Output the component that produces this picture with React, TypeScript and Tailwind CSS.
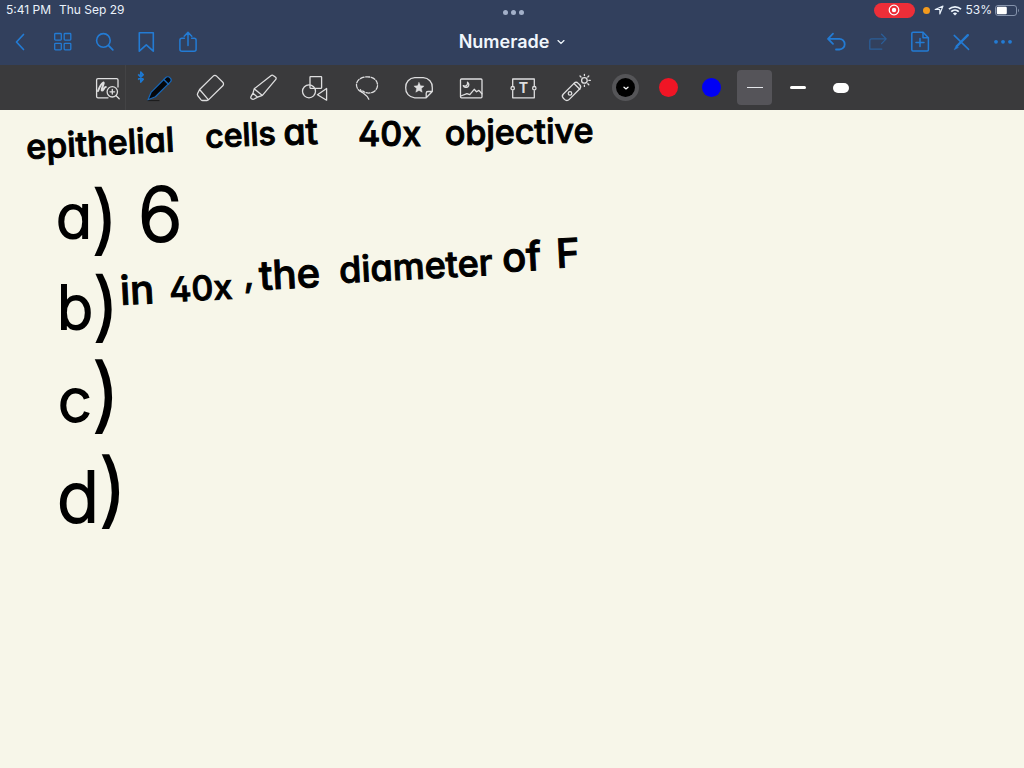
import { useState, type ReactNode } from "react";

interface Word {
  text: string;
  className: string;
}

interface Tool {
  id: string;
  label: string;
  icon: ReactNode;
}

const SMALL = "font-medium [-webkit-text-stroke:1px_black]";
const LARGE = "font-light [-webkit-text-stroke:2px_black]";

const NOTES: Word[][] = [
  [
    { text: "epithelial", className: `left-[27px] top-[20px] text-[34px] -rotate-3 ${SMALL}` },
    { text: "cells", className: `left-[206px] top-[11px] text-[32px] -rotate-3 ${SMALL}` },
    { text: "at", className: `left-[284px] top-[4px] text-[36px] -rotate-2 ${SMALL}` },
    { text: "40x", className: `left-[358px] top-[7px] text-[34px] ${SMALL}` },
    { text: "objective", className: `left-[445px] top-[6px] text-[34px] -rotate-1 ${SMALL}` },
  ],
  [
    { text: "a", className: `left-[56px] top-[76px] text-[60px] ${LARGE}` },
    { text: ")", className: `left-[92px] top-[71px] text-[74px] ${LARGE}` },
    { text: "6", className: `left-[138px] top-[67px] text-[74px] ${LARGE}` },
  ],
  [
    { text: "b", className: `left-[57px] top-[167px] text-[60px] ${LARGE}` },
    { text: ")", className: `left-[93px] top-[158px] text-[74px] ${LARGE}` },
    { text: "in", className: `left-[121px] top-[161px] text-[40px] -rotate-3 ${SMALL}` },
    { text: "40x", className: `left-[170px] top-[163px] text-[34px] -rotate-3 ${SMALL}` },
    { text: ",", className: `left-[244px] top-[148px] text-[34px] ${SMALL}` },
    { text: "the", className: `left-[260px] top-[146px] text-[40px] -rotate-3 ${SMALL}` },
    { text: "diameter", className: `left-[340px] top-[142px] text-[36px] -rotate-3 ${SMALL}` },
    { text: "of", className: `left-[503px] top-[128px] text-[40px] -rotate-3 ${SMALL}` },
    { text: "F", className: `left-[557px] top-[124px] text-[40px] -rotate-3 ${SMALL}` },
  ],
  [
    { text: "c", className: `left-[58px] top-[260px] text-[60px] ${LARGE}` },
    { text: ")", className: `left-[92px] top-[243px] text-[80px] ${LARGE}` },
  ],
  [
    { text: "d", className: `left-[57px] top-[352px] text-[70px] ${LARGE}` },
    { text: ")", className: `left-[99px] top-[338px] text-[80px] ${LARGE}` },
  ],
];

function Icon({ children }: { children: ReactNode }) {
  return (
    <svg
      className="w-8 h-8 flex-shrink-0"
      viewBox="0 0 32 32"
      fill="none"
      stroke="currentColor"
      strokeWidth="1.3"
      strokeLinecap="round"
      strokeLinejoin="round"
      aria-hidden="true"
    >
      {children}
    </svg>
  );
}

const NAV_LEFT: Tool[] = [
  { id: "back", label: "Back", icon: <path d="M18.5 8.5 11.5 16l7 7.5" strokeWidth="1.7" /> },
  {
    id: "pages",
    label: "Pages",
    icon: (
      <>
        <rect x="7.7" y="7.5" width="6.6" height="6.6" rx="0.8" />
        <rect x="17.2" y="7.5" width="6.6" height="6.6" rx="0.8" />
        <rect x="7.7" y="17.3" width="6.6" height="6.6" rx="0.8" />
        <rect x="17.2" y="17.3" width="6.6" height="6.6" rx="0.8" />
      </>
    ),
  },
  {
    id: "search",
    label: "Search",
    icon: (
      <>
        <circle cx="14.4" cy="14.4" r="6.8" strokeWidth="1.6" />
        <path d="m19.4 19.4 4.4 4.4" strokeWidth="1.8" />
      </>
    ),
  },
  {
    id: "bookmark",
    label: "Bookmark",
    icon: <path d="M8.3 6.8h14v18.4l-7-6.4-7 6.4z" strokeWidth="1.6" />,
  },
  {
    id: "share",
    label: "Share",
    icon: (
      <path
        d="M11.4 12.3H8.9a2 2 0 0 0-2 2v8.9a2 2 0 0 0 2 2h12.2a2 2 0 0 0 2-2v-8.9a2 2 0 0 0-2-2h-2.5M15 19.5V6.6M11.2 10.2 15 6.4l3.8 3.8"
        strokeWidth="1.5"
      />
    ),
  },
];

const NAV_RIGHT: Tool[] = [
  {
    id: "undo",
    label: "Undo",
    icon: <path d="M14 7.7 9 12.9l5 5M9.2 12.9h11.2a5.3 5.3 0 0 1 0 10.6H17" strokeWidth="1.8" />,
  },
  {
    id: "redo",
    label: "Redo",
    icon: (
      <path d="m20.6 8.2 4.6 4.7-4.6 4.7M25 12.9H10.6a1.8 1.8 0 0 0-1.8 1.8v8.4h12" opacity="0.5" />
    ),
  },
  {
    id: "add",
    label: "Add page",
    icon: (
      <>
        <path
          d="M10 6.3h10l5.4 5.5v12a1.2 1.2 0 0 1-1.2 1.2H10a1.2 1.2 0 0 1-1.2-1.2V7.5A1.2 1.2 0 0 1 10 6.3z"
          strokeWidth="1.5"
        />
        <path d="M20 6.5v5.2h5.2M17 12.6v8M13 16.6h8" strokeWidth="1.5" />
      </>
    ),
  },
  {
    id: "readonly",
    label: "Read-only mode",
    icon: (
      <>
        <path d="m9.2 9.4 14.4 14" strokeWidth="1.5" />
        <path d="M22.8 9.2 12 20" strokeWidth="2.4" />
        <path d="m11.2 19.6-2 4.2 4-2.2z" fill="currentColor" strokeWidth="0.5" />
      </>
    ),
  },
  {
    id: "more",
    label: "More",
    icon: (
      <g fill="currentColor" stroke="none">
        <circle cx="9" cy="15.8" r="1.9" />
        <circle cx="16" cy="15.8" r="1.9" />
        <circle cx="23" cy="15.8" r="1.9" />
      </g>
    ),
  },
];

const TOOLS: Tool[] = [
  {
    id: "zoom",
    label: "Zoom window",
    icon: (
      <>
        <path d="M27 15V8a1.4 1.4 0 0 0-1.4-1.4H7A1.4 1.4 0 0 0 5.6 8v16.4A1.4 1.4 0 0 0 7 25.8h10" />
        <path
          d="M7 19c1.4-3.6 3.4-7.8 5.2-8.4 2-.4-2.8 7.6-1.2 8 1.4.2 2.2-3.6 3.8-3.6"
          strokeWidth="2"
        />
        <circle cx="21.3" cy="19.8" r="5.2" />
        <path d="m25.2 23.8 3 3M19 19.8h4.6M21.3 17.5v4.6" />
      </>
    ),
  },
  {
    id: "pen",
    label: "Pen",
    icon: (
      <>
        <path d="M5 28.6h11" stroke="#111" strokeWidth="0.8" />
        <path
          d="m8 20.4 14.8-14.9c1.1-1.1 3-1 4.3.3 1.3 1.3 1.4 3 .3 4.1L12.4 24.8 5 27.8z"
          fill="#05070b"
          stroke="#1767b8"
          strokeWidth="1.2"
        />
        <path d="m20.7 7.5 4.8 4.7" stroke="#1767b8" strokeWidth="1.5" />
      </>
    ),
  },
  {
    id: "eraser",
    label: "Eraser",
    icon: (
      <path d="M18.2 4.1a2.4 2.4 0 0 1 3.4 0l6.2 6.2a2.4 2.4 0 0 1 0 3.4L13.4 27.9a2 2 0 0 1-1.4.6H7.6a2 2 0 0 1-1.5-.7l-3.2-4a2.2 2.2 0 0 1-.3-2.3l2-4zM4.6 17.5l8.9 10.3" />
    ),
  },
  {
    id: "highlighter",
    label: "Highlighter",
    icon: (
      <path d="M24.2 3.6a1.4 1.4 0 0 1 2-.2l2.4 1.9a1.4 1.4 0 0 1 .2 2L15.4 23.4l-8.2-6.6zM7.2 16.8 6 21.2l4.6 4 4.8-1.8M6 21.2l-1.9 3.2c-.5.8-.4 1.7.4 2.3.8.6 1.9.8 2.7.3l3.4-1.8" />
    ),
  },
  {
    id: "shapes",
    label: "Shapes",
    icon: (
      <>
        <rect x="11" y="4.7" width="11.6" height="11.6" rx="0.5" />
        <circle cx="10" cy="19.3" r="6.5" />
        <path d="m18.5 22.7 9.1-6.2v11.7z" />
      </>
    ),
  },
  {
    id: "lasso",
    label: "Lasso",
    icon: (
      <>
        <path
          d="M10.5 20C3.9 16.8 4.2 9.8 9 6.8c4.8-3 12-2.7 15.5 1.2 3.7 4.2 2.3 10.6-3.7 12.6-2.9.9-6.6.6-9-1.6"
          strokeDasharray="4 1.6"
        />
        <path d="M9.4 17.6c.2 3.6 6.4 4.2 8.4 9.6" />
      </>
    ),
  },
  {
    id: "elements",
    label: "Elements",
    icon: (
      <>
        <path d="M23.2 25.8H11.7a9.5 9.5 0 0 1-9-10.1 9.5 9.5 0 0 1 9-10.1h8.6a9.5 9.5 0 0 1 9 10.1v3.8zM23.2 25.8v-4.5a1.8 1.8 0 0 1 1.8-1.8h4.3" />
        <path
          d="m16 10.4 1.5 3.3 3.6.4-2.7 2.5.8 3.6-3.2-1.8-3.2 1.8.8-3.6-2.7-2.5 3.6-.4z"
          fill="currentColor"
          strokeWidth="0.4"
        />
      </>
    ),
  },
  {
    id: "image",
    label: "Image",
    icon: (
      <>
        <rect x="5.5" y="7" width="21.5" height="18.8" rx="1" />
        <path d="M12.5 10.2c1.8 1 1.7 3.5.2 4.7-1.5 1-3.8.6-4.4-1.2 2.8 1.1 4.8-.7 4.2-3.5zM5.8 24l6.1-2.4 2.9 1 4.4-5.3 2.3 2.5 2.4-1.4 3 3.3" />
      </>
    ),
  },
  {
    id: "text",
    label: "Text",
    icon: (
      <>
        <path d="M5.7 13.7V7h21.6v6.7M5.7 18.7v7.1h21.6v-7.1" />
        <circle cx="5.7" cy="16.2" r="1.7" />
        <circle cx="27.3" cy="16.2" r="1.7" />
        <text
          x="16.5"
          y="21.2"
          textAnchor="middle"
          fill="currentColor"
          stroke="none"
          className="font-['Inter',sans-serif] text-[14px] font-bold"
        >
          T
        </text>
      </>
    ),
  },
  {
    id: "laser",
    label: "Laser pointer",
    icon: (
      <>
        <rect x="2" y="15.5" width="21" height="8" rx="3" transform="rotate(-45 12.5 19.5)" />
        <circle cx="11" cy="21.4" r="1.8" />
        <path d="m15 11.5 5.8 5.8" />
        <circle cx="25.4" cy="8.4" r="2.8" />
        <path d="M25.4 3.6V2.4M25.4 14.4v-1.2M29.9 8.4h1.4M28.8 5l1-1M22 5l-1-1M28.8 11.8l1 1" />
      </>
    ),
  },
];

const COLORS = [
  { name: "Black", className: "bg-black" },
  { name: "Red", className: "bg-[#f01525]" },
  { name: "Blue", className: "bg-[#0000f5]" },
];

const WIDTHS = [
  { name: "Thin", className: "w-4 h-px bg-gray-200" },
  { name: "Medium", className: "w-4 h-[3px] rounded-full bg-white" },
  { name: "Thick", className: "w-4 h-[10px] rounded-full bg-white" },
];

function NavButton({ item }: { item: Tool }) {
  return (
    <button aria-label={item.label} className="w-[42px] h-full flex items-center justify-center">
      <Icon>{item.icon}</Icon>
    </button>
  );
}

function StatusBar() {
  return (
    <div className="grid grid-cols-[1fr_auto_1fr] items-center h-5 pl-1.5 pr-1 text-[12px] leading-4 text-[#eaf2fb]">
      <div className="flex gap-2">
        <span>5:41 PM</span>
        <span>Thu Sep 29</span>
      </div>
      <div className="flex gap-[3px] pt-1">
        <span className="w-[5px] h-[5px] rounded-full bg-[#a3b0c9]" />
        <span className="w-[5px] h-[5px] rounded-full bg-[#a3b0c9]" />
        <span className="w-[5px] h-[5px] rounded-full bg-[#a3b0c9]" />
      </div>
      <div className="flex items-center justify-end">
        <span className="w-[41px] h-[15px] mr-2 rounded-full bg-[#ed2e38] flex items-center justify-center">
          <svg className="w-3 h-3" viewBox="0 0 12 12" fill="none" aria-hidden="true">
            <circle cx="6" cy="6" r="4.8" stroke="white" strokeWidth="1.2" />
            <circle cx="6" cy="6" r="2.2" fill="white" />
          </svg>
        </span>
        <span className="w-[7px] h-[7px] mr-1 rounded-full bg-[#f39a1d]" />
        <svg className="w-[10px] h-[10px] mr-1" viewBox="0 0 10 10" fill="none" aria-hidden="true">
          <path d="M9 1 5.8 9V4.5H1.2z" stroke="currentColor" strokeWidth="1.1" strokeLinejoin="round" />
        </svg>
        <svg className="w-[14px] h-[11px] mr-1" viewBox="0 0 14 11" fill="none" aria-hidden="true">
          <path
            d="M1 4.2a8.7 8.7 0 0 1 12 0M3.2 6.6a5.5 5.5 0 0 1 7.6 0"
            stroke="currentColor"
            strokeWidth="1.8"
          />
          <path d="M7 10.6 4.9 8.5a3 3 0 0 1 4.2 0z" fill="currentColor" />
        </svg>
        <span className="mr-[3px]">53%</span>
        <svg className="w-[25px] h-[11px]" viewBox="0 0 25 11" fill="none" aria-hidden="true">
          <rect x="0.5" y="0.5" width="21" height="10" rx="2.5" stroke="#8593ac" />
          <rect x="1.8" y="1.8" width="10" height="7.4" rx="1.2" fill="white" />
          <path d="M23 3.8c1.2.4 1.2 3 0 3.4z" fill="#8593ac" />
        </svg>
      </div>
    </div>
  );
}

export default function App() {
  const [activeColor, setActiveColor] = useState("Black");
  const [activeWidth, setActiveWidth] = useState("Thin");

  return (
    <div className="min-h-screen flex flex-col bg-[#f7f6e9] font-['Inter',sans-serif]">
      <header className="bg-[#32405d] pb-px">
        <StatusBar />
        <nav className="grid grid-cols-[1fr_auto_1fr] items-center h-11 text-[#237bd4]">
          <div className="flex h-full">
            {NAV_LEFT.map((item) => (
              <NavButton key={item.id} item={item} />
            ))}
          </div>
          <button className="flex items-center gap-2 text-[#f0f6fc]">
            <span className="text-[18px] leading-6 font-semibold">Numerade</span>
            <svg className="w-2 h-2" viewBox="0 0 8 8" fill="none" aria-hidden="true">
              <path d="m1 2.6 3 2.8 3-2.8" stroke="currentColor" strokeWidth="1.3" strokeLinecap="round" />
            </svg>
          </button>
          <div className="flex h-full justify-end">
            {NAV_RIGHT.map((item) => (
              <NavButton key={item.id} item={item} />
            ))}
          </div>
        </nav>
      </header>

      <div className="flex items-center h-[45px] pl-[81px] bg-[#3a3a3c] text-[#dededf]">
        {TOOLS.map((tool) => (
          <button
            key={tool.id}
            aria-label={tool.label}
            className="relative w-[52px] h-full flex items-center justify-center"
          >
            <Icon>{tool.icon}</Icon>
            {tool.id === "pen" && (
              <>
                <span className="absolute -left-2 top-0 h-full w-px bg-[#434345]" />
                <svg
                  className="absolute left-1 top-1.5 w-2 h-3"
                  viewBox="0 0 8 12"
                  fill="none"
                  aria-hidden="true"
                >
                  <path
                    d="m1.2 3.3 5 5L3.8 11V1l2.4 2.7-5 5"
                    stroke="#1c78d2"
                    strokeWidth="1.7"
                    strokeLinejoin="round"
                  />
                </svg>
              </>
            )}
          </button>
        ))}
        <div className="flex items-center h-full ml-[3px]">
          {COLORS.map((color) => (
            <button
              key={color.name}
              aria-label={color.name}
              onClick={() => setActiveColor(color.name)}
              className="w-[43px] h-full flex items-center justify-center"
            >
              <span
                className={`w-[19px] h-[19px] rounded-full flex items-center justify-center ${color.className} ${
                  color.name === activeColor ? "ring-4 ring-[#555558]" : ""
                }`}
              >
                {color.name === activeColor && (
                  <svg className="w-2 h-2" viewBox="0 0 8 8" fill="none" aria-hidden="true">
                    <path d="m2 3.2 2 1.8 2-1.8" stroke="white" strokeWidth="1.3" strokeLinecap="round" />
                  </svg>
                )}
              </span>
            </button>
          ))}
          {WIDTHS.map((width) => (
            <button
              key={width.name}
              aria-label={width.name}
              onClick={() => setActiveWidth(width.name)}
              className="w-[43px] h-full flex items-center justify-center"
            >
              <span
                className={`w-[35px] h-[35px] rounded flex items-center justify-center ${
                  width.name === activeWidth ? "bg-[#555459]" : ""
                }`}
              >
                <span className={width.className} />
              </span>
            </button>
          ))}
        </div>
      </div>

      <main className="relative flex-1 text-black">
        {NOTES.map((line, i) => (
          <p key={i}>
            {line.map((word) => (
              <span
                key={word.text}
                className={`absolute origin-bottom-left leading-none whitespace-nowrap [font-feature-settings:'cv11','cv02'] ${word.className}`}
              >
                {word.text}
              </span>
            ))}
          </p>
        ))}
      </main>
    </div>
  );
}
